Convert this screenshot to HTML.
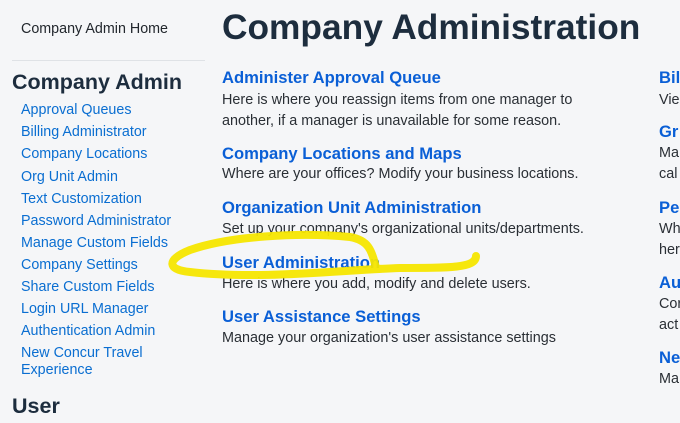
<!DOCTYPE html>
<html><head><meta charset="utf-8"><style>
body{margin:0;width:680px;height:423px;overflow:hidden;background:#f5f6f8;font-family:"Liberation Sans",sans-serif;position:relative}
.a{position:absolute;white-space:nowrap}
.nav{color:#0a6ed1;font-size:14.3px;left:21px}
.h{color:#0a5fd6;font-weight:bold;font-size:16.6px;left:222px}
.d{color:#2a2f35;font-size:14.4px;left:222px}
.r{left:659px}
</style></head><body>
<div class="a" style="left:21px;top:21px;font-size:14.3px;color:#22272d">Company Admin Home</div>
<div class="a" style="left:12px;top:60px;width:193px;border-top:1px solid #dfe2e6"></div>
<div class="a" style="left:12px;top:70px;font-size:21.5px;font-weight:bold;color:#1d2d3e">Company Admin</div>
<div class="a nav" style="top:102px">Approval Queues</div>
<div class="a nav" style="top:124px">Billing Administrator</div>
<div class="a nav" style="top:146px">Company Locations</div>
<div class="a nav" style="top:169px">Org Unit Admin</div>
<div class="a nav" style="top:191px">Text Customization</div>
<div class="a nav" style="top:213px">Password Administrator</div>
<div class="a nav" style="top:235px">Manage Custom Fields</div>
<div class="a nav" style="top:257px">Company Settings</div>
<div class="a nav" style="top:279px">Share Custom Fields</div>
<div class="a nav" style="top:301px">Login URL Manager</div>
<div class="a nav" style="top:323px">Authentication Admin</div>
<div class="a nav" style="top:345px">New Concur Travel</div>
<div class="a nav" style="top:362px">Experience</div>
<div class="a" style="left:12px;top:394px;font-size:21.5px;font-weight:bold;color:#1d2d3e">User</div>
<div class="a" style="left:222px;top:8px;font-size:35.3px;font-weight:bold;color:#1d2d3e">Company Administration</div>
<div class="a h" style="top:68px">Administer Approval Queue</div>
<div class="a d" style="top:92px">Here is where you reassign items from one manager to</div>
<div class="a d" style="top:113px">another, if a manager is unavailable for some reason.</div>
<div class="a h" style="top:144px">Company Locations and Maps</div>
<div class="a d" style="top:166px">Where are your offices? Modify your business locations.</div>
<div class="a h" style="top:198px">Organization Unit Administration</div>
<div class="a d" style="top:221px">Set up your company's organizational units/departments.</div>
<div class="a h" style="top:253px">User Administration</div>
<div class="a d" style="top:276px">Here is where you add, modify and delete users.</div>
<div class="a h" style="top:307px">User Assistance Settings</div>
<div class="a d" style="top:330px">Manage your organization's user assistance settings</div>
<div class="a h r" style="top:68px">Bil</div>
<div class="a d r" style="top:92px">Vie</div>
<div class="a h r" style="top:122px">Gr</div>
<div class="a d r" style="top:145px">Ma</div>
<div class="a d r" style="top:166px">cal</div>
<div class="a h r" style="top:198px">Pe</div>
<div class="a d r" style="top:221px">Wh</div>
<div class="a d r" style="top:242px">her</div>
<div class="a h r" style="top:273px">Au</div>
<div class="a d r" style="top:296px">Cor</div>
<div class="a d r" style="top:317px">act</div>
<div class="a h r" style="top:348px">Ne</div>
<div class="a d r" style="top:371px">Ma</div>
<svg class="a" style="left:0;top:0" width="680" height="423"><path d="M376 268 C372 250 368 240 350 237 C300 232 230 236 190 250 C165 260 168 270 190 272 C260 280 340 270 400 268 C450 268 476 268 476 256" fill="none" stroke="#f5e600" stroke-width="8" stroke-linecap="round" opacity="0.95"/></svg>
</body></html>
